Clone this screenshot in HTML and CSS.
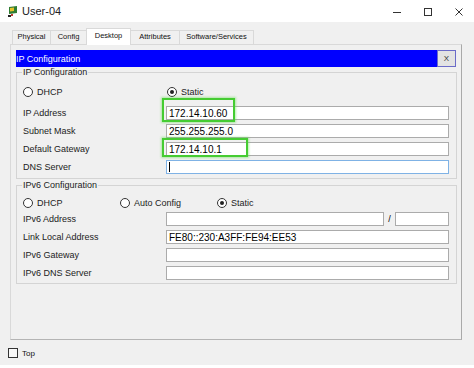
FILE: index.html
```html
<!DOCTYPE html>
<html lang="en">
<head>
    <meta charset="UTF-8">
    <title>User-04</title>
    <link rel="stylesheet" href="styles.css">
</head>
<body>
    <div class="window">
        <!-- Title bar -->
        <header class="titlebar">
            <svg class="app-icon" width="11" height="11" viewBox="0 0 11 11">
                <polygon points="2,1 10,0 10,7 2,8" fill="#2f7d32"/>
                <polygon points="3,2 7,1.5 7,5 3,5.5" fill="#e6c229"/>
                <rect x="4" y="8" width="2" height="2" fill="#c0392b"/>
                <rect x="1" y="9" width="3" height="2" fill="#222"/>
            </svg>
            <span class="title">User-04</span>
            <div class="controls">
                <span class="ctrl">
                    <svg width="10" height="10" viewBox="0 0 10 10"><line x1="1" y1="5.5" x2="9" y2="5.5" stroke="#333"/></svg>
                </span>
                <span class="ctrl">
                    <svg width="10" height="10" viewBox="0 0 10 10"><rect x="1.5" y="1.5" width="7" height="7" fill="none" stroke="#333"/></svg>
                </span>
                <span class="ctrl">
                    <svg width="10" height="10" viewBox="0 0 10 10"><path d="M1.5 1.5 L8.5 8.5 M8.5 1.5 L1.5 8.5" stroke="#333"/></svg>
                </span>
            </div>
        </header>

        <main class="content">
            <nav class="tabs">
                <span class="tab tab-physical">Physical</span>
                <span class="tab tab-config">Config</span>
                <span class="tab tab-desktop active">Desktop</span>
                <span class="tab tab-attributes">Attributes</span>
                <span class="tab tab-software">Software/Services</span>
            </nav>

            <section class="panel">
                <div class="app-bar">
                    <span>IP Configuration</span>
                    <span class="app-close">X</span>
                </div>

                <!-- IPv4 -->
                <fieldset class="group v4">
                    <legend>IP Configuration</legend>
                    <div class="radios">
                        <span class="radio wide"><span class="dot"></span>DHCP</span>
                        <span class="radio"><span class="dot on"></span>Static</span>
                    </div>
                    <div class="field">
                        <label>IP Address</label>
                        <div class="input">172.14.10.60<span class="mark mark-ip"></span></div>
                    </div>
                    <div class="field">
                        <label>Subnet Mask</label>
                        <div class="input">255.255.255.0</div>
                    </div>
                    <div class="field">
                        <label>Default Gateway</label>
                        <div class="input">172.14.10.1<span class="mark mark-gw"></span></div>
                    </div>
                    <div class="field">
                        <label>DNS Server</label>
                        <div class="input focused"><span class="caret"></span></div>
                    </div>
                </fieldset>

                <!-- IPv6 -->
                <fieldset class="group v6">
                    <legend>IPv6 Configuration</legend>
                    <div class="radios">
                        <span class="radio"><span class="dot"></span>DHCP</span>
                        <span class="radio"><span class="dot"></span>Auto Config</span>
                        <span class="radio"><span class="dot on"></span>Static</span>
                    </div>
                    <div class="field">
                        <label>IPv6 Address</label>
                        <div class="input short"></div>
                        <span class="slash">/</span>
                        <div class="input prefix"></div>
                    </div>
                    <div class="field">
                        <label>Link Local Address</label>
                        <div class="input">FE80::230:A3FF:FE94:EE53</div>
                    </div>
                    <div class="field">
                        <label>IPv6 Gateway</label>
                        <div class="input"></div>
                    </div>
                    <div class="field">
                        <label>IPv6 DNS Server</label>
                        <div class="input"></div>
                    </div>
                </fieldset>
            </section>

            <div class="top-check"><span class="box"></span>Top</div>
        </main>
    </div>
</body>
</html>
```

FILE: styles.css
```css
body {
    margin: 0;
    background-color: #fff;
    font-family: "Liberation Sans", Arial, sans-serif;
    color: #000;
}

.window {
    width: 474px;
    height: 368px;
    display: flex;
    flex-direction: column;
}

/* Title bar */
.titlebar {
    height: 22px;
    display: flex;
    align-items: center;
    background-color: #fff;
    flex-shrink: 0;
}

.app-icon {
    margin-left: 7px;
    margin-top: 1px;
}

.title {
    margin-left: 4px;
    font-size: 11px;
    color: #222;
}

.controls {
    margin-left: auto;
    display: flex;
    align-self: stretch;
}

.ctrl {
    width: 31px;
    display: flex;
    align-items: center;
    justify-content: center;
    padding-top: 1px;
}

/* Window body */
.content {
    height: 343px;
    background-color: #f0f0f0;
    flex-shrink: 0;
}

.tabs {
    display: flex;
    height: 16px;
    padding: 6px 0 0 12px;
}

.tab {
    box-sizing: border-box;
    height: 14px;
    margin-top: 2px;
    margin-right: -1px;
    border: 1px solid #d9d9d9;
    border-bottom: none;
    font-size: 7.5px;
    line-height: 12px;
    text-align: center;
    color: #111;
}

.tab-physical { width: 39px; }
.tab-config { width: 37px; }
.tab-desktop { width: 45px; }
.tab-attributes { width: 50px; }
.tab-software { width: 75px; }

.tab.active {
    height: 17px;
    margin-top: 0;
    margin-bottom: -1px;
    background-color: #fff;
    line-height: 14px;
    position: relative;
    z-index: 1;
}

.panel {
    box-sizing: border-box;
    width: 452px;
    height: 296px;
    margin-left: 10px;
    padding: 5px 0 0 5px;
    border: 1px solid #d9d9d9;
    border-right-color: #a9a9a9;
    border-bottom-color: #b4b4b4;
}

.app-bar {
    box-sizing: border-box;
    width: 440px;
    height: 17px;
    display: flex;
    align-items: center;
    background-color: #0000ff;
    color: #fff;
    font-size: 9px;
}

.app-close {
    box-sizing: border-box;
    margin-left: auto;
    width: 19px;
    height: 17px;
    display: flex;
    align-items: center;
    justify-content: center;
    background-color: #e3e3e3;
    border: 1px solid #6b6bc8;
    color: #333;
    font-size: 8px;
}

/* Group boxes */
.group {
    box-sizing: border-box;
    width: 441px;
    min-width: 0;
    margin: 0;
    padding: 7px 7px 4px 6px;
    border: 1px solid #d4d4d4;
}

.group legend {
    padding: 0 1px;
    margin-left: -1px;
    font-size: 9px;
    line-height: 11px;
    color: #222;
}

.group.v6 {
    margin-top: 1px;
    padding-top: 5px;
    padding-bottom: 3px;
}

.radios {
    height: 14px;
    display: flex;
    align-items: center;
}

.radio {
    width: 97px;
    display: flex;
    align-items: center;
    gap: 4px;
    font-size: 9px;
    color: #222;
}

.radio.wide {
    width: 144px;
}

.dot {
    box-sizing: border-box;
    width: 10px;
    height: 10px;
    border-radius: 50%;
    border: 1px solid #333;
    background-color: #fff;
    display: flex;
    align-items: center;
    justify-content: center;
}

.dot.on::after {
    content: "";
    width: 4px;
    height: 4px;
    border-radius: 50%;
    background-color: #222;
}

.field {
    height: 14px;
    margin-top: 4px;
    display: flex;
    align-items: center;
}

.v4 .radios + .field {
    margin-top: 7px;
}

.v6 .radios + .field {
    margin-top: 2px;
}

.field label {
    width: 143px;
    font-size: 9px;
    color: #222;
}

.input {
    box-sizing: border-box;
    width: 283px;
    height: 14px;
    padding-left: 2px;
    display: flex;
    align-items: center;
    border: 1px solid #ababab;
    background-color: #fff;
    font-size: 10px;
    position: relative;
}

.input.short { width: 218px; }
.input.prefix { width: 54px; }

.input.focused {
    border-color: #7fb2e5;
}

.caret {
    width: 1px;
    height: 10px;
    background-color: #000;
}

.slash {
    width: 11px;
    text-align: center;
    font-size: 9px;
}

/* Green highlight boxes drawn over the inputs */
.mark {
    position: absolute;
    box-sizing: border-box;
    border: 2px solid #45cc32;
    box-shadow: 0 0 2px 1px rgba(90, 220, 70, 0.45);
}

.mark-ip {
    left: -5px;
    top: -9px;
    width: 73px;
    height: 24px;
}

.mark-gw {
    left: -5px;
    top: -5px;
    width: 86px;
    height: 19px;
}

.top-check {
    display: flex;
    align-items: center;
    gap: 4px;
    margin: 8px 0 0 8px;
    font-size: 8px;
    color: #111;
}

.top-check .box {
    box-sizing: border-box;
    width: 10px;
    height: 10px;
    border: 1px solid #333;
    background-color: #f8f8f8;
}
```
